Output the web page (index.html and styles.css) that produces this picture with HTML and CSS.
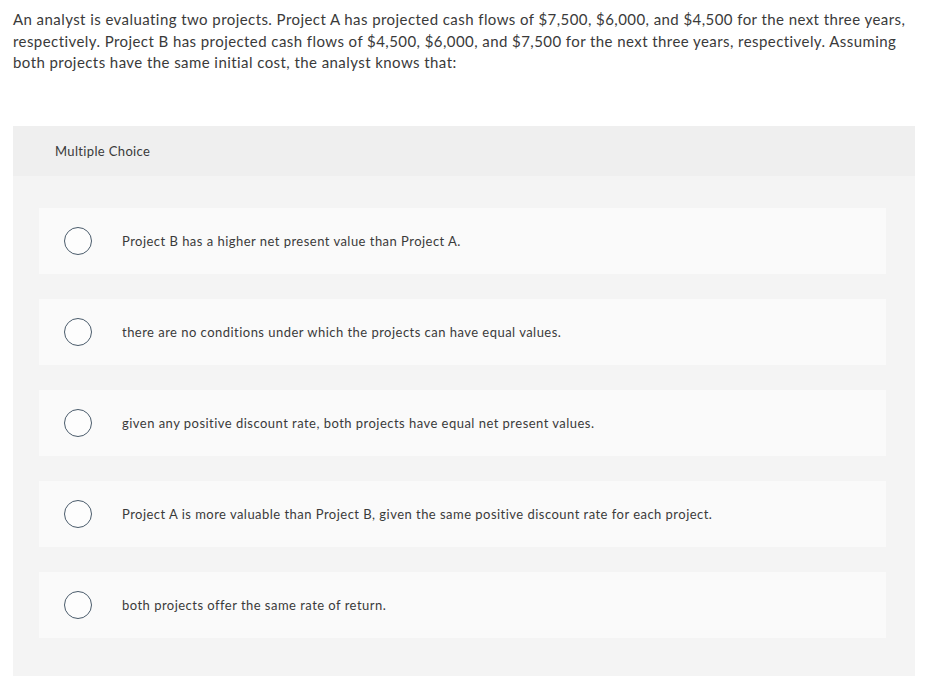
FILE: index.html
```html
<!DOCTYPE html>
<html lang="en">
<head>
<meta charset="utf-8">
<link rel="stylesheet" href="styles.css">
</head>
<body>
<div class="page">
  <p class="question">An analyst is evaluating two projects. Project A has projected cash flows of $7,500, $6,000, and $4,500 for the next three years, respectively. Project B has projected cash flows of $4,500, $6,000, and $7,500 for the next three years, respectively. Assuming both projects have the same initial cost, the analyst knows that:</p>
  <div class="panel">
    <div class="panel-head">Multiple Choice</div>
    <div class="panel-body">
      <div class="option"><span class="radio"></span><span class="label">Project B has a higher net present value than Project A.</span></div>
      <div class="option"><span class="radio"></span><span class="label">there are no conditions under which the projects can have equal values.</span></div>
      <div class="option"><span class="radio"></span><span class="label">given any positive discount rate, both projects have equal net present values.</span></div>
      <div class="option"><span class="radio"></span><span class="label">Project A is more valuable than Project B, given the same positive discount rate for each project.</span></div>
      <div class="option"><span class="radio"></span><span class="label">both projects offer the same rate of return.</span></div>
    </div>
  </div>
</div>
</body>
</html>
```
FILE: styles.css
```css
html, body {
  margin: 0;
  padding: 0;
  background: #ffffff;
}
body {
  font-family: "Lato", "Open Sans", sans-serif;
  color: #333333;
}
.page {
  padding: 9px 27px 0 13px;
}
.question {
  margin: 0;
  font-size: 15px;
  line-height: 21.5px;
  letter-spacing: 0.43px;
  color: #3a3a3a;
}
.panel {
  margin-top: 52px;
  background: #f4f4f4;
}
.panel-head {
  height: 50px;
  display: flex;
  align-items: center;
  padding-left: 42px;
  background: #efefef;
  font-size: 13px;
  letter-spacing: 0.35px;
  color: #3a3a3a;
}
.panel-body {
  padding: 32px 29px 38px 26px;
  display: flex;
  flex-direction: column;
  gap: 25px;
}
.option {
  height: 66px;
  display: flex;
  align-items: center;
  background: #fafafa;
  padding-left: 25px;
}
.radio {
  width: 26px;
  height: 26px;
  border: 1.5px solid #4a5b6b;
  border-radius: 50%;
  background: #fdfdfd;
  flex: none;
}
.label {
  margin-left: 30px;
  font-size: 13px;
  letter-spacing: 0.47px;
  color: #3a3a3a;
}
```
